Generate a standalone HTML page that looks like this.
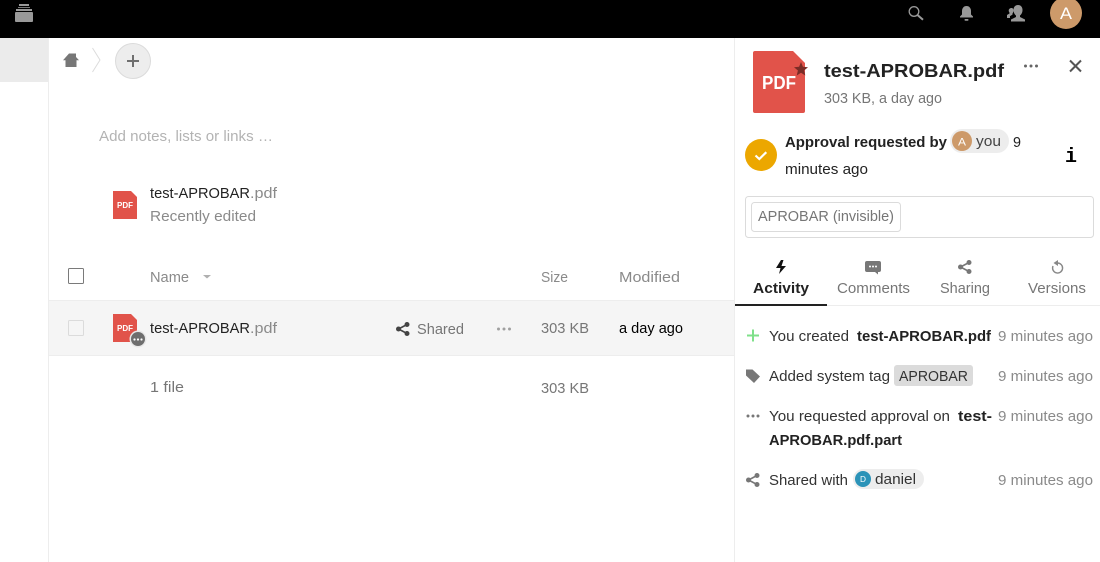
<!DOCTYPE html>
<html><head><meta charset="utf-8"><style>
html,body{margin:0;padding:0;background:#fff;width:1100px;height:562px;overflow:hidden}
svg{display:block}
text{font-family:"Liberation Sans",sans-serif;font-size:15px;fill:#222}
.g{fill:#767676}.l{fill:#8a8a8a}.b{font-weight:bold}
</style></head><body>
<svg width="1100" height="562" viewBox="0 0 1100 562" xmlns="http://www.w3.org/2000/svg">
<defs>
<g id="share"><circle cx="11" cy="2.5" r="2.5"/><circle cx="2.5" cy="7" r="2.5"/><circle cx="11" cy="11.5" r="2.5"/><path d="M11 2.5L2.5 7L11 11.5" fill="none" stroke="currentColor" stroke-width="1.6"/></g>
</defs>
<rect width="1100" height="38" fill="#000"/>
<!-- logo -->
<g fill="#999"><rect x="15" y="12" width="18" height="10" rx="1"/><rect x="16" y="9" width="16" height="2"/><rect x="18" y="7" width="12" height="1" fill="#777"/><rect x="19" y="4" width="10" height="2"/></g>
<!-- header icons -->
<g fill="none" stroke="#999" stroke-width="1.300"><circle cx="914" cy="11.500" r="4.800"/><path d="M917.500 15L923 19.800" stroke-width="2"/></g>
<path d="M966.500 6c3 0 4.500 2.500 4.500 5v3.500l2 2v1h-13v-1l2-2V11c0-2.500 1.500-5 4.500-5z" fill="#999"/><rect x="964.500" y="19" width="4" height="1.700" rx=".8" fill="#999"/>
<path d="M1018 5c3 0 4.500 2.300 4.500 5s-1.200 4.500-2.500 5.500v1.500l5 2.500v2h-14v-2l5-2.500v-1.500c-1.300-1-2.500-2.800-2.500-5.500s1.500-5 4.500-5z" fill="#999"/><path d="M1011.500 8c1.500 0 2 1.200 2 2.600s-.7 2.400-1 3v1l-2.500 1.500V18H1007v-3l2.500-1.500v-.8c-.5-.7-.8-1.400-.8-2.200 0-1.400 1.300-2.500 2.800-2.500z" fill="#999"/>
<circle cx="1066" cy="13" r="16" fill="#cd9a6a"/><text x="1060" y="19" style="font-size:17px;fill:#fff" textLength="12" lengthAdjust="spacingAndGlyphs">A</text>

<!-- nav -->
<rect x="0" y="38" width="48" height="44" fill="#ebebeb"/>
<rect x="48" y="38" width="1" height="524" fill="#ededed"/>
<!-- breadcrumb -->
<path d="M69 53.500h7v3.500l3 3.300h-2.500V67h-11v-6.700H63z" fill="#777"/>
<path d="M92.500 48L100 60L92.500 72" fill="none" stroke="#dcdcdc" stroke-width="1"/>
<circle cx="133" cy="61" r="17.500" fill="#ededed" stroke="#dbdbdb" stroke-width="1"/>
<path d="M133 55v12M127 61h12" stroke="#6f6f6f" stroke-width="2" fill="none"/>

<text x="99" y="141" style="fill:#b3b3b3" textLength="174" lengthAdjust="spacingAndGlyphs">Add notes, lists or links …</text>

<!-- recent -->
<path d="M113 191h18l6 6v22h-24z" fill="#e1534a"/>
<text x="117" y="208" class="b" style="font-size:8px;fill:#fff" textLength="16" lengthAdjust="spacingAndGlyphs">PDF</text>
<text x="150" y="198" textLength="100" lengthAdjust="spacingAndGlyphs">test-APROBAR</text><text x="250" y="198" class="l" textLength="27" lengthAdjust="spacingAndGlyphs">.pdf</text>
<text x="150" y="221" class="l" textLength="106" lengthAdjust="spacingAndGlyphs">Recently edited</text>

<!-- table head -->
<rect x="68.500" y="268.500" width="15" height="15" rx="1" fill="#fff" stroke="#7a7a7a"/>
<text x="150" y="282" class="l" textLength="39" lengthAdjust="spacingAndGlyphs">Name</text>
<path d="M203 275h8l-4 3.500z" fill="#b0b0b0"/>
<text x="541" y="282" class="l" textLength="27" lengthAdjust="spacingAndGlyphs">Size</text>
<text x="619" y="282" class="l" textLength="61" lengthAdjust="spacingAndGlyphs">Modified</text>

<!-- row -->
<rect x="49" y="300" width="685" height="56" fill="#f5f5f5"/>
<rect x="49" y="300" width="685" height="1" fill="#ededed"/>
<rect x="49" y="355" width="685" height="1" fill="#ededed"/>
<rect x="68.500" y="320.500" width="15" height="15" rx="1" fill="#f5f5f5" stroke="#dbdbdb"/>
<path d="M113 314h18l6 6v22h-24z" fill="#e1534a"/>
<text x="117" y="331" class="b" style="font-size:8px;fill:#fff" textLength="16" lengthAdjust="spacingAndGlyphs">PDF</text>
<circle cx="138" cy="339" r="8.500" fill="#e8e8e8"/><circle cx="138" cy="339" r="7" fill="#6e6e6e"/>
<g fill="#fff"><circle cx="134.500" cy="339.500" r="1.100"/><circle cx="138" cy="339.500" r="1.100"/><circle cx="141.500" cy="339.500" r="1.100"/></g>
<text x="150" y="333" textLength="100" lengthAdjust="spacingAndGlyphs">test-APROBAR</text><text x="250" y="333" class="l" textLength="27" lengthAdjust="spacingAndGlyphs">.pdf</text>
<use href="#share" x="396" y="322" fill="#444" color="#444"/>
<text x="417" y="334" class="g" textLength="47" lengthAdjust="spacingAndGlyphs">Shared</text>
<g fill="#a0a0a0"><circle cx="498.500" cy="329" r="1.500"/><circle cx="504" cy="329" r="1.500"/><circle cx="509.500" cy="329" r="1.500"/></g>
<text x="541" y="333" class="g" textLength="48" lengthAdjust="spacingAndGlyphs">303 KB</text>
<text x="619" y="333" style="fill:#000" textLength="64" lengthAdjust="spacingAndGlyphs">a day ago</text>
<text x="150" y="392" class="g" textLength="34" lengthAdjust="spacingAndGlyphs">1 file</text>
<text x="541" y="393" class="g" textLength="48" lengthAdjust="spacingAndGlyphs">303 KB</text>

<!-- sidebar -->
<rect x="734" y="38" width="1" height="524" fill="#ededed"/>
<path d="M753 53a2 2 0 0 1 2-2h38l12 12v48a2 2 0 0 1-2 2h-48a2 2 0 0 1-2-2z" fill="#e1534a"/>
<text x="762" y="89" class="b" style="font-size:18px;fill:#fff" textLength="34" lengthAdjust="spacingAndGlyphs">PDF</text>
<path d="M801 62l1.900 4.800 5.100.4-3.900 3.300 1.200 5-4.300-2.700-4.300 2.700 1.200-5-3.900-3.300 5.100-.4z" fill="#7a2c26"/>
<text x="824" y="77" class="b" style="font-size:18px" textLength="180" lengthAdjust="spacingAndGlyphs">test-APROBAR.pdf</text>
<text x="824" y="103" class="g" textLength="118" lengthAdjust="spacingAndGlyphs">303 KB, a day ago</text>
<g fill="#666"><circle cx="1025.500" cy="66" r="1.500"/><circle cx="1031" cy="66" r="1.500"/><circle cx="1036.500" cy="66" r="1.500"/></g>
<path d="M1070 60.500l11 11M1081 60.500l-11 11" stroke="#555" stroke-width="2" fill="none"/>

<circle cx="761" cy="155" r="16" fill="#eca700"/>
<path d="M755.500 155.500l3.800 3.500 7-6.800" fill="none" stroke="#fff" stroke-width="2.200"/>
<text x="785" y="147" class="b" textLength="162" lengthAdjust="spacingAndGlyphs">Approval requested by</text>
<rect x="950" y="129" width="59" height="24" rx="12" fill="#ededed"/>
<circle cx="962" cy="141" r="10" fill="#cd9a6a"/><text x="958" y="145.500" style="font-size:11px;fill:#fff" textLength="8" lengthAdjust="spacingAndGlyphs">A</text>
<text x="976" y="146" style="fill:#444" textLength="25" lengthAdjust="spacingAndGlyphs">you</text>
<text x="1013" y="147" textLength="8" lengthAdjust="spacingAndGlyphs">9</text>
<text x="785" y="174" textLength="83" lengthAdjust="spacingAndGlyphs">minutes ago</text>
<text x="1065" y="162" style="font-family:'Liberation Mono',monospace;font-weight:bold;font-size:20px;fill:#000" textLength="12" lengthAdjust="spacingAndGlyphs">i</text>

<rect x="745.500" y="196.500" width="348" height="41" rx="3" fill="#fff" stroke="#dbdbdb"/>
<rect x="751.500" y="202.500" width="149" height="29" rx="3" fill="#fff" stroke="#dbdbdb"/>
<text x="758" y="221" class="g" textLength="136" lengthAdjust="spacingAndGlyphs">APROBAR (invisible)</text>

<!-- tabs -->
<path d="M781 260L776 268H780.500L779 274L786 266H781.500L783.500 260Z" fill="#111"/>
<path d="M867 261h12a2 2 0 0 1 2 2v7a2 2 0 0 1-2 2h-1v2.500l-3-2.500h-8a2 2 0 0 1-2-2v-7a2 2 0 0 1 2-2z" fill="#777"/>
<g fill="#fff"><circle cx="870" cy="266.500" r="1"/><circle cx="873" cy="266.500" r="1"/><circle cx="876" cy="266.500" r="1"/></g>
<use href="#share" x="958" y="260" fill="#777" color="#777"/>
<path d="M1057.500 263a5 5 0 1 1-4.500 3" fill="none" stroke="#888" stroke-width="1.400"/><path d="M1058 260v6l-4.500-3z" fill="#888"/>
<text x="753" y="293" class="b" textLength="56" lengthAdjust="spacingAndGlyphs">Activity</text>
<text x="837" y="293" class="g" textLength="73" lengthAdjust="spacingAndGlyphs">Comments</text>
<text x="940" y="293" class="g" textLength="50" lengthAdjust="spacingAndGlyphs">Sharing</text>
<text x="1028" y="293" class="g" textLength="58" lengthAdjust="spacingAndGlyphs">Versions</text>
<rect x="735" y="305" width="365" height="1" fill="#ededed"/>
<rect x="735" y="304" width="92" height="2" fill="#222"/>

<!-- activity -->
<path d="M753 329.500v12M747 335.500h12" stroke="#7fe08a" stroke-width="2" fill="none"/>
<text x="769" y="341" style="fill:#333" textLength="80" lengthAdjust="spacingAndGlyphs">You created</text>
<text x="857" y="341" class="b" textLength="134" lengthAdjust="spacingAndGlyphs">test-APROBAR.pdf</text>
<text x="998" y="341" class="l" textLength="95" lengthAdjust="spacingAndGlyphs">9 minutes ago</text>

<path d="M746 369.500h6.500l7.500 7-6 6.500-8-7.500z" fill="#777"/>
<text x="769" y="381" style="fill:#333" textLength="121" lengthAdjust="spacingAndGlyphs">Added system tag</text>
<rect x="894" y="365" width="79" height="21" rx="3" fill="#dbdbdb"/>
<text x="899" y="381" style="fill:#333" textLength="69" lengthAdjust="spacingAndGlyphs">APROBAR</text>
<text x="998" y="381" class="l" textLength="95" lengthAdjust="spacingAndGlyphs">9 minutes ago</text>

<g fill="#777"><circle cx="748" cy="416" r="1.500"/><circle cx="753" cy="416" r="1.500"/><circle cx="758" cy="416" r="1.500"/></g>
<text x="769" y="421" style="fill:#333" textLength="181" lengthAdjust="spacingAndGlyphs">You requested approval on</text>
<text x="958" y="421" class="b" textLength="34" lengthAdjust="spacingAndGlyphs">test-</text>
<text x="769" y="445" class="b" textLength="133" lengthAdjust="spacingAndGlyphs">APROBAR.pdf.part</text>
<text x="998" y="421" class="l" textLength="95" lengthAdjust="spacingAndGlyphs">9 minutes ago</text>

<use href="#share" x="746" y="473" fill="#777" color="#777"/>
<text x="769" y="485" style="fill:#333" textLength="79" lengthAdjust="spacingAndGlyphs">Shared with</text>
<rect x="853" y="469" width="71" height="20" rx="10" fill="#ededed"/>
<circle cx="863" cy="479" r="8" fill="#2b93b8"/><text x="860" y="482" style="font-size:8px;fill:#fff" textLength="6" lengthAdjust="spacingAndGlyphs">D</text>
<text x="875" y="484" style="fill:#333" textLength="41" lengthAdjust="spacingAndGlyphs">daniel</text>
<text x="998" y="485" class="l" textLength="95" lengthAdjust="spacingAndGlyphs">9 minutes ago</text>
</svg>
</body></html>
